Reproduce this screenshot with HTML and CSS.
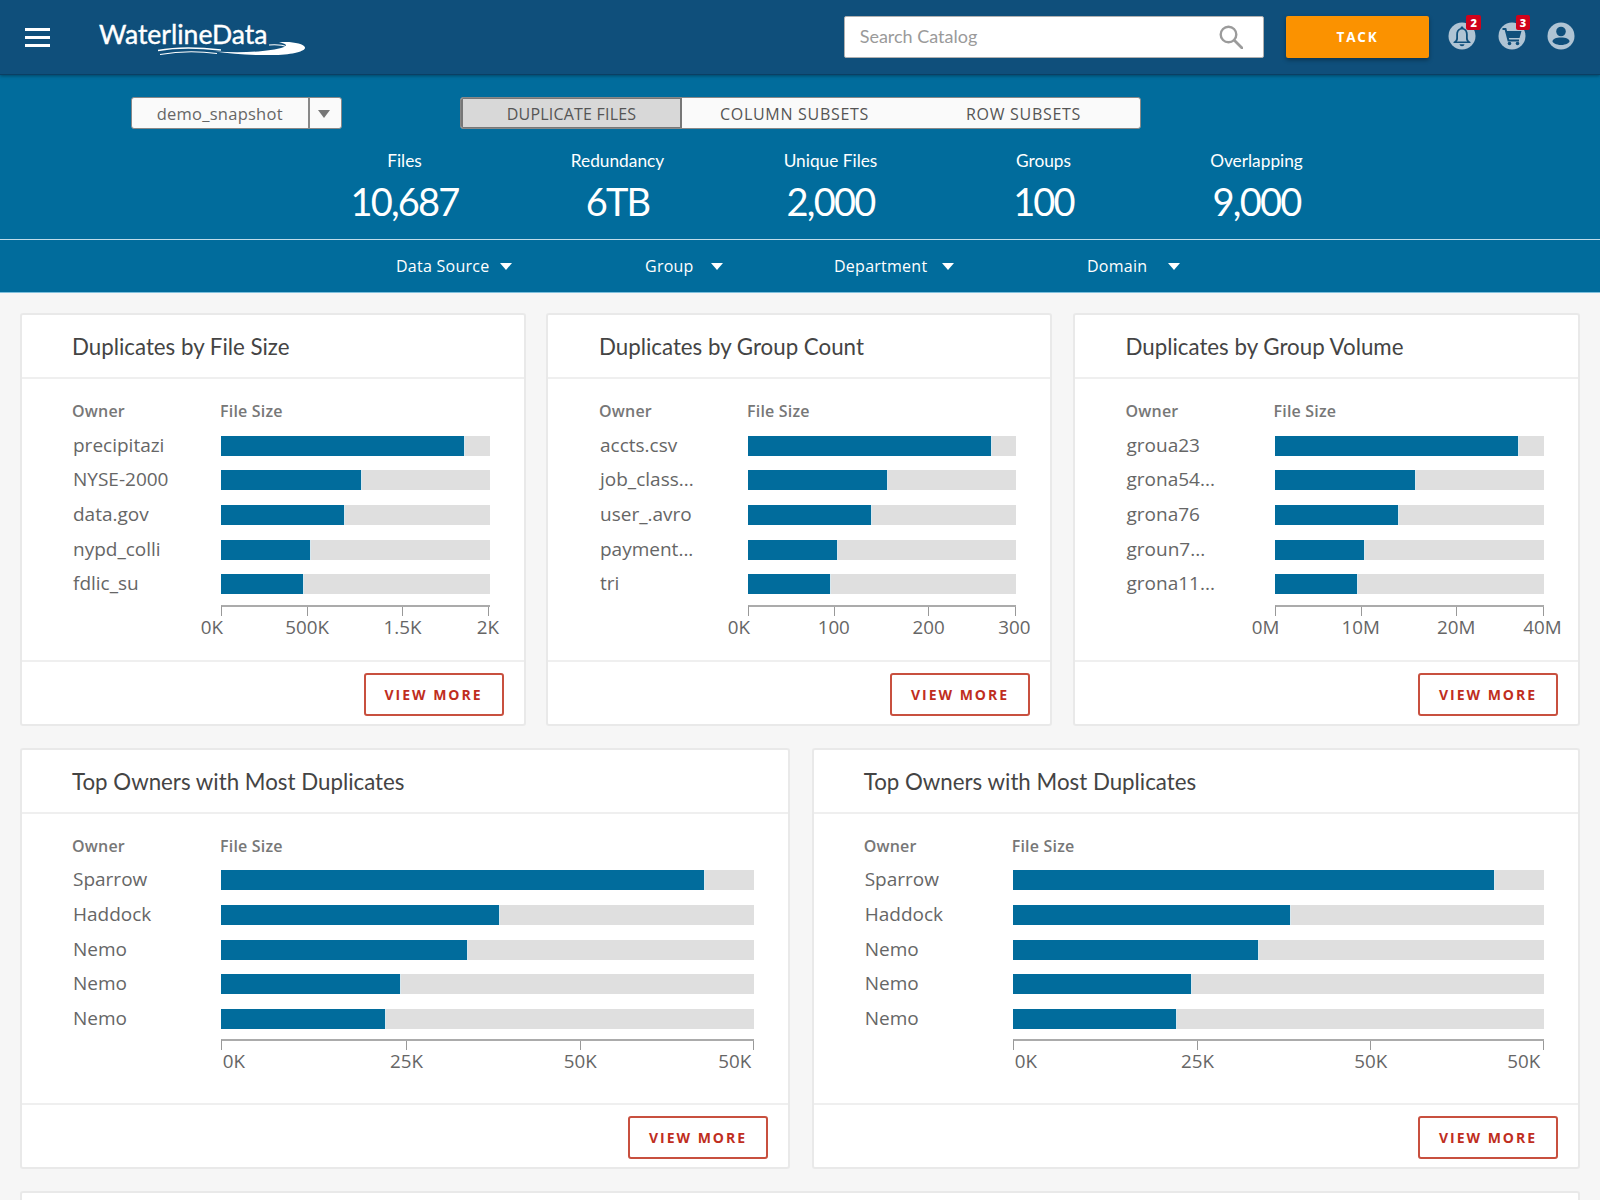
FILE: index.html
```html
<!DOCTYPE html>
<html lang="en">
<head>
<meta charset="utf-8">
<title>Waterline Data</title>
<link rel="stylesheet" href="styles.css">
</head>
<body>
<div class="app">
<header class="topbar">
  <button class="menu" aria-label="Menu"><span></span><span></span><span></span></button>
  <div class="logo">
    <span class="logo-text">WaterlineData</span>
    <svg class="swoosh" viewBox="0 0 150 20" aria-hidden="true">
      <path fill="#fff" d="M58 13.500C85 15 112 14 127 9 131 7.500 129 5.500 122 4.500 133 3 147 5.500 148 9.500 148.500 13 137 16.500 118 17 96 17.500 76 16 58 13.500Z"/>
      <path fill="none" stroke="#fff" stroke-width="1.100" d="M112 7C119 6.500 126 7 130 9"/>
      <path fill="none" stroke="#fff" stroke-width="1.400" d="M1 12.500C20 9 42 9.500 64 12"/>
      <path fill="none" stroke="#fff" stroke-width="1.100" d="M3 16.500C25 12.500 42 13 60 15.500"/>
    </svg>
  </div>
  <div class="search">
    <span class="search-text">Search Catalog</span>
    <svg class="search-icon" viewBox="0 0 24 24" aria-hidden="true"><circle cx="9.500" cy="9.500" r="7.800" fill="none" stroke="#9b9b9b" stroke-width="2.400"/><path d="M15.500 15.500L23 23" stroke="#9b9b9b" stroke-width="2.800" stroke-linecap="round"/></svg>
  </div>
  <button class="tack">TACK</button>
  <div class="icons">
    <div class="icon-wrap">
      <svg class="round-icon" viewBox="0 0 28 28" aria-hidden="true"><circle cx="14" cy="14" r="13.500" fill="#afc4d4"/><path fill="#0f4f7b" d="M14 4.500C15 4.500 15.500 5.200 15.500 6 18.500 6.800 19.800 9.500 19.800 12.500L19.800 16C19.800 18 21 19 22.500 20L22.500 21 5.500 21 5.500 20C7 19 8.200 18 8.200 16L8.200 12.500C8.200 9.500 9.500 6.800 12.500 6 12.500 5.200 13 4.500 14 4.500Z"/><path fill="#0f4f7b" d="M11.500 22.200H16.500C16.300 23.500 15.300 24.200 14 24.200 12.700 24.200 11.700 23.500 11.500 22.200Z"/><path fill="#afc4d4" d="M14 7.500C17 7.500 18 10 18 12.500L18 16.500C18 17.800 18.500 18.800 19.300 19.500L8.700 19.500C9.500 18.800 10 17.800 10 16.500L10 12.500C10 10 11 7.500 14 7.500Z"/></svg>
      <span class="badge">2</span>
    </div>
    <div class="icon-wrap">
      <svg class="round-icon" viewBox="0 0 28 28" aria-hidden="true"><circle cx="14" cy="14" r="13.500" fill="#afc4d4"/><path fill="none" stroke="#0f4f7b" stroke-width="2" d="M4.500 7H7.500L10.500 18.500H21"/><path fill="#0f4f7b" d="M8.500 9H23.500L21.500 16H10.300Z"/><circle cx="11.500" cy="21.500" r="1.800" fill="#0f4f7b"/><circle cx="19.500" cy="21.500" r="1.800" fill="#0f4f7b"/></svg>
      <span class="badge">3</span>
    </div>
    <div class="icon-wrap">
      <svg class="round-icon" viewBox="0 0 28 28" aria-hidden="true"><circle cx="14" cy="14" r="13.500" fill="#afc4d4"/><circle cx="14" cy="9.500" r="4.800" fill="#0f4f7b"/><path fill="#0f4f7b" d="M14 15.500C19 15.500 22.500 17 22.500 19.500 22.500 20.500 19 23 14 23 9 23 5.500 20.500 5.500 19.500 5.500 17 9 15.500 14 15.500Z"/></svg>
    </div>
  </div>
</header>

<section class="subhead">
  <div class="controls">
    <div class="select">
      <span class="select-value">demo_snapshot</span>
      <span class="select-arrow"></span>
    </div>
    <div class="tabs">
      <span class="tab tab-active">DUPLICATE FILES</span>
      <span class="tab tab-col">COLUMN SUBSETS</span>
      <span class="tab tab-row">ROW SUBSETS</span>
    </div>
  </div>
  <div class="stats">
    <div class="stat"><div class="stat-label">Files</div><div class="stat-value">10,687</div></div>
    <div class="stat"><div class="stat-label">Redundancy</div><div class="stat-value">6TB</div></div>
    <div class="stat"><div class="stat-label">Unique Files</div><div class="stat-value">2,000</div></div>
    <div class="stat"><div class="stat-label">Groups</div><div class="stat-value">100</div></div>
    <div class="stat"><div class="stat-label">Overlapping</div><div class="stat-value">9,000</div></div>
  </div>
  <nav class="filters">
    <span class="filter">Data Source<i class="caret"></i></span>
    <span class="filter">Group<i class="caret"></i></span>
    <span class="filter">Department<i class="caret"></i></span>
    <span class="filter">Domain<i class="caret"></i></span>
  </nav>
</section>

<main class="content">
  <div class="row row-three">
    <article class="card">
      <h2 class="card-title">Duplicates by File Size</h2>
      <div class="card-body">
        <div class="chart-head"><span class="col-owner">Owner</span><span>File Size</span></div>
        <div class="bar-row"><span class="col-owner name">precipitazi</span><div class="track"><div class="fill" style="width:90.9%"></div></div></div>
        <div class="bar-row"><span class="col-owner name">NYSE-2000</span><div class="track"><div class="fill" style="width:52.4%"></div></div></div>
        <div class="bar-row"><span class="col-owner name">data.gov</span><div class="track"><div class="fill" style="width:46.3%"></div></div></div>
        <div class="bar-row"><span class="col-owner name">nypd_colli</span><div class="track"><div class="fill" style="width:33.5%"></div></div></div>
        <div class="bar-row"><span class="col-owner name">fdlic_su</span><div class="track"><div class="fill" style="width:31%"></div></div></div>
        <div class="axis-wrap">
          <div class="axis"><i style="width:32.1%"></i><i style="width:35.4%"></i><i style="width:32.5%"></i></div>
          <div class="axis-labels"><span style="left:-3.4%">0K</span><span style="left:32.1%">500K</span><span style="left:67.6%">1.5K</span><span style="left:99.4%">2K</span></div>
        </div>
      </div>
      <div class="card-foot"><button class="more">VIEW MORE</button></div>
    </article>
    <article class="card">
      <h2 class="card-title">Duplicates by Group Count</h2>
      <div class="card-body">
        <div class="chart-head"><span class="col-owner">Owner</span><span>File Size</span></div>
        <div class="bar-row"><span class="col-owner name">accts.csv</span><div class="track"><div class="fill" style="width:90.9%"></div></div></div>
        <div class="bar-row"><span class="col-owner name">job_class...</span><div class="track"><div class="fill" style="width:52.4%"></div></div></div>
        <div class="bar-row"><span class="col-owner name">user_.avro</span><div class="track"><div class="fill" style="width:46.3%"></div></div></div>
        <div class="bar-row"><span class="col-owner name">payment...</span><div class="track"><div class="fill" style="width:33.5%"></div></div></div>
        <div class="bar-row"><span class="col-owner name">tri</span><div class="track"><div class="fill" style="width:31%"></div></div></div>
        <div class="axis-wrap">
          <div class="axis"><i style="width:32.1%"></i><i style="width:35.4%"></i><i style="width:32.5%"></i></div>
          <div class="axis-labels"><span style="left:-3.4%">0K</span><span style="left:32%">100</span><span style="left:67.4%">200</span><span style="left:99.4%">300</span></div>
        </div>
      </div>
      <div class="card-foot"><button class="more">VIEW MORE</button></div>
    </article>
    <article class="card">
      <h2 class="card-title">Duplicates by Group Volume</h2>
      <div class="card-body">
        <div class="chart-head"><span class="col-owner">Owner</span><span>File Size</span></div>
        <div class="bar-row"><span class="col-owner name">groua23</span><div class="track"><div class="fill" style="width:90.9%"></div></div></div>
        <div class="bar-row"><span class="col-owner name">grona54...</span><div class="track"><div class="fill" style="width:52.4%"></div></div></div>
        <div class="bar-row"><span class="col-owner name">grona76</span><div class="track"><div class="fill" style="width:46.3%"></div></div></div>
        <div class="bar-row"><span class="col-owner name">groun7...</span><div class="track"><div class="fill" style="width:33.5%"></div></div></div>
        <div class="bar-row"><span class="col-owner name">grona11...</span><div class="track"><div class="fill" style="width:31%"></div></div></div>
        <div class="axis-wrap">
          <div class="axis"><i style="width:32.1%"></i><i style="width:35.4%"></i><i style="width:32.5%"></i></div>
          <div class="axis-labels"><span style="left:-3.3%">0M</span><span style="left:32%">10M</span><span style="left:67.4%">20M</span><span style="left:99.4%">40M</span></div>
        </div>
      </div>
      <div class="card-foot"><button class="more">VIEW MORE</button></div>
    </article>
  </div>
  <div class="row row-two">
    <article class="card card-wide">
      <h2 class="card-title">Top Owners with Most Duplicates</h2>
      <div class="card-body">
        <div class="chart-head"><span class="col-owner">Owner</span><span>File Size</span></div>
        <div class="bar-row"><span class="col-owner name">Sparrow</span><div class="track"><div class="fill" style="width:90.8%"></div></div></div>
        <div class="bar-row"><span class="col-owner name">Haddock</span><div class="track"><div class="fill" style="width:52.4%"></div></div></div>
        <div class="bar-row"><span class="col-owner name">Nemo</span><div class="track"><div class="fill" style="width:46.4%"></div></div></div>
        <div class="bar-row"><span class="col-owner name">Nemo</span><div class="track"><div class="fill" style="width:33.7%"></div></div></div>
        <div class="bar-row"><span class="col-owner name">Nemo</span><div class="track"><div class="fill" style="width:31%"></div></div></div>
        <div class="axis-wrap">
          <div class="axis"><i style="width:34.8%"></i><i style="width:32.6%"></i><i style="width:32.6%"></i></div>
          <div class="axis-labels"><span style="left:2.4%">0K</span><span style="left:34.8%">25K</span><span style="left:67.4%">50K</span><span style="left:96.4%">50K</span></div>
        </div>
      </div>
      <div class="card-foot"><button class="more">VIEW MORE</button></div>
    </article>
    <article class="card card-wide">
      <h2 class="card-title">Top Owners with Most Duplicates</h2>
      <div class="card-body">
        <div class="chart-head"><span class="col-owner">Owner</span><span>File Size</span></div>
        <div class="bar-row"><span class="col-owner name">Sparrow</span><div class="track"><div class="fill" style="width:90.8%"></div></div></div>
        <div class="bar-row"><span class="col-owner name">Haddock</span><div class="track"><div class="fill" style="width:52.4%"></div></div></div>
        <div class="bar-row"><span class="col-owner name">Nemo</span><div class="track"><div class="fill" style="width:46.4%"></div></div></div>
        <div class="bar-row"><span class="col-owner name">Nemo</span><div class="track"><div class="fill" style="width:33.7%"></div></div></div>
        <div class="bar-row"><span class="col-owner name">Nemo</span><div class="track"><div class="fill" style="width:31%"></div></div></div>
        <div class="axis-wrap">
          <div class="axis"><i style="width:34.8%"></i><i style="width:32.6%"></i><i style="width:32.6%"></i></div>
          <div class="axis-labels"><span style="left:2.5%">0K</span><span style="left:34.8%">25K</span><span style="left:67.4%">50K</span><span style="left:96.2%">50K</span></div>
        </div>
      </div>
      <div class="card-foot"><button class="more">VIEW MORE</button></div>
    </article>
  </div>
  <article class="card card-next"></article>
</main>
</div>
</body>
</html>
```

FILE: styles.css
```css
* { box-sizing: border-box; }
html, body { margin: 0; padding: 0; }
body { font-family: "Open Sans", "Liberation Sans", sans-serif; background: #f6f6f6; color: #666; }
.app { width: 1600px; height: 1200px; overflow: hidden; }

.topbar { height: 75px; background: #0f4f7b; display: flex; align-items: center; padding: 0 25px; border-bottom: 1px solid #0b3f63; box-shadow: 0 1px 3px rgba(0,0,0,.35); position: relative; z-index: 1; }
.menu { width: 25px; height: 19px; padding: 0; border: 0; background: none; display: flex; flex-direction: column; justify-content: space-between; }
.menu span { display: block; height: 3px; background: #fff; }
.logo { position: relative; width: 210px; height: 50px; margin-left: 49px; margin-top: -1px; }
.logo-text { font-family: "Lato", sans-serif; font-weight: 400; font-size: 26.500px; line-height: 34px; color: #fff; -webkit-text-stroke: .4px #fff; display: block; margin-top: 5px; }
.swoosh { position: absolute; left: 58px; top: 26px; width: 150px; height: 20px; }
.search { width: 421px; height: 42px; margin-left: 535px; background: #fff; border: 1px solid #b0b0b0; border-radius: 2px; display: flex; align-items: center; justify-content: space-between; padding: 0 20px 0 15px; }
.search-text { font-family: "Lato", sans-serif; font-size: 18px; color: #9a9a9a; padding-bottom: 2px; }
.search-icon { width: 24px; height: 24px; }
.tack { width: 143px; height: 42px; margin-left: 22px; padding: 0; background: #fb9200; border: 0; border-radius: 2px; color: #fff; font-family: "Open Sans", sans-serif; font-weight: 700; font-size: 13.500px; letter-spacing: 1.800px; box-shadow: 0 2px 4px rgba(0,0,0,.35); }
.icons { display: flex; gap: 21.300px; margin: -3px 0 0 19.500px; }
.icon-wrap { position: relative; width: 28px; height: 28px; }
.round-icon { width: 28px; height: 28px; display: block; }
.badge { position: absolute; left: 18px; top: -7px; width: 14.500px; height: 15px; background: #d0021b; border-radius: 2px; color: #fff; font-size: 11px; font-weight: 800; line-height: 15px; text-align: center; }

.subhead { height: 218px; background: #016c9c; color: #fff; border-bottom: 1px solid #7fc0dd; }
.controls { display: flex; padding: 22px 0 0 130.500px; height: 74px; }
.select { width: 211px; height: 32px; background: #fafafa; border: 1px solid #888; border-radius: 3px; display: flex; }
.select-value { width: 178.500px; border-right: 2px solid #888; font-size: 16.500px; line-height: 31px; text-align: center; color: #666; letter-spacing: .25px; font-weight: 500; }
.select-arrow { flex: 1; position: relative; }
.select-arrow::after { content: ""; position: absolute; left: 8px; top: 12px; border: 6px solid transparent; border-top: 8px solid #777; border-bottom: 0; }
.tabs { width: 681px; height: 32px; margin-left: 118.500px; background: #fafafa; border: 1px solid #888; border-radius: 3px; display: flex; }
.tab { font-size: 16px; line-height: 33px; text-align: center; color: #555; letter-spacing: .7px; font-weight: 500; }
.tab-active { width: 221px; background: #d8d8d8; border: 2px solid #777; border-top-width: 1px; border-bottom-width: 1px; line-height: 31px; border-radius: 2px 0 0 2px; letter-spacing: .2px; }
.tab-col { width: 225px; }
.tab-row { width: 233px; }
.stats { display: grid; grid-template-columns: repeat(5, 213px); padding-left: 298px; height: 90px; }
.stat { text-align: center; }
.stat-label { font-family: "Lato", sans-serif; font-size: 17.300px; line-height: 24px; }
.stat-value { font-family: "Lato", sans-serif; font-size: 38px; line-height: 50px; margin-top: 3px; letter-spacing: -1.800px; }
.filters { border-top: 1px solid #bfdcea; display: grid; grid-template-columns: 249px 189px 253px auto; padding: 0 0 0 396px; height: 53px; align-items: center; }
.filter { font-size: 16px; letter-spacing: .25px; display: flex; align-items: center; }
.caret { width: 0; height: 0; margin-left: 11px; border: 6px solid transparent; border-top: 7px solid #fff; border-bottom: 0; }
.filter:nth-child(2) .caret { margin-left: 17px; }
.filter:nth-child(3) .caret { margin-left: 15px; }
.filter:nth-child(4) .caret { margin-left: 21px; }

.content { padding: 20px; display: flex; flex-direction: column; gap: 22px; }
.row { display: grid; }
.row-three { grid-template-columns: 505.500px 506px 1fr; gap: 20.500px; }
.row-two { grid-template-columns: 770px 1fr; gap: 21.700px; }
.card { background: #fff; border: 2px solid #e9e9e9; border-radius: 3px; }
.card-title { margin: 0; height: 64px; padding-left: 50px; border-bottom: 2px solid #efefef; font-family: "Lato", sans-serif; font-weight: 400; font-size: 22.300px; line-height: 63px; color: #444; }
.card-body { padding: 22px 34px 21px 50px; }
.row-three .card:not(:first-child) .card-title { padding-left: 51px; }
.row-three .card:not(:first-child) .card-body { padding-left: 51px; }
.card-wide .card-body { padding-bottom: 30px; }
.chart-head { display: flex; font-size: 16px; line-height: 20px; color: #777; font-weight: 600; margin-bottom: 7.400px; letter-spacing: .2px; }
.chart-head .col-owner { width: 148px; }
.col-owner { width: 149px; flex: none; }
.bar-row { display: flex; align-items: center; height: 34.670px; }
.name { font-size: 19px; line-height: 24px; color: #666; padding: 0 0 2px 1px; }
.track { flex: 1; height: 20px; background: #dfdfdf; }
.fill { height: 100%; background: #016c9c; border-right: 1px solid #d6e8f0; }
.axis-wrap { margin: 3px 0 0 149px; }
.axis { display: flex; height: 11px; border-top: 2px solid #ababab; border-left: 1px solid #999; }
.axis i { display: block; border-right: 1px solid #999; }
.axis-labels { position: relative; height: 24px; margin-top: -1px; font-size: 18.800px; line-height: 24px; color: #666; }
.axis-labels span { position: absolute; top: 0; transform: translateX(-50%); white-space: nowrap; }
.card-foot { border-top: 2px solid #efefef; padding: 11px 20px 8px 0; display: flex; justify-content: flex-end; }
.more { width: 140px; height: 43px; background: #fff; border: 2px solid #c8503f; border-radius: 3px; color: #bf2e1e; font-family: "Open Sans", sans-serif; font-weight: 700; font-size: 14px; letter-spacing: 2px; padding: 0; }
.card-next { height: 60px; }
```
